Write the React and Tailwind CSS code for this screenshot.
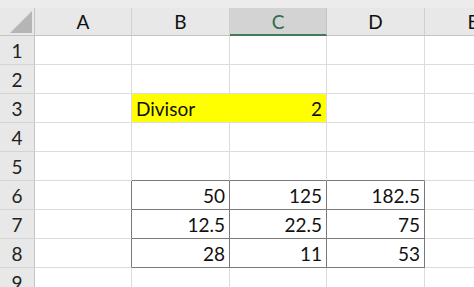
import React from "react";

const COLS = ["A", "B", "C", "D", "E"];
const COLW = ["w-[97px]", "w-[98px]", "w-[97px]", "w-[98px]", "w-[97px]"];

const data = {
  3: { B: { t: "Divisor", left: true }, C: { t: "2" } },
  6: { B: { t: "50" }, C: { t: "125" }, D: { t: "182.5" } },
  7: { B: { t: "12.5" }, C: { t: "22.5" }, D: { t: "75" } },
  8: { B: { t: "28" }, C: { t: "11" }, D: { t: "53" } },
};

function borderClasses(r, c) {
  const inTable = r >= 6 && r <= 8 && ["B", "C", "D"].includes(c);
  let right = "border-r-[#dcdcdc]";
  let bottom = "border-b-[#dcdcdc]";
  if (inTable) {
    right = "border-r-[#7a7a7a]";
    bottom = "border-b-[#7a7a7a]";
  }
  if (r >= 6 && r <= 8 && c === "A") right = "border-r-[#7a7a7a]";
  if (r === 5 && ["B", "C", "D"].includes(c)) bottom = "border-b-[#7a7a7a]";
  if (r === 3 && c === "B") right = "border-r-[#ffff00]";
  return right + " " + bottom;
}

function Cell({ r, c, w }) {
  const d = data[r] && data[r][c];
  const yellow = r === 3 && (c === "B" || c === "C");
  return (
    <div
      className={
        "h-[29px] shrink-0 border-r border-b flex items-end pb-[4px] px-[4px] text-[19px] leading-none text-[#111] " +
        w +
        " " +
        borderClasses(r, c) +
        " " +
        (yellow ? "bg-[#ffff00] " : "bg-white ") +
        (d && d.left ? "justify-start" : "justify-end")
      }
    >
      {d ? d.t : ""}
    </div>
  );
}

export default function App() {
  const rows = [1, 2, 3, 4, 5, 6, 7, 8, 9];
  return (
    <div className="w-[474px] h-[287px] overflow-hidden bg-white font-['Lato',sans-serif] select-none">
      <div className="h-[8px] bg-[#ececec]" />
      <div className="flex h-[28px] bg-[#e8e8e8]">
        <div className="w-[35px] h-[28px] shrink-0 border-r border-b border-[#c4c4c4] relative">
          <svg className="absolute left-0 top-0" width="35" height="28" viewBox="0 0 35 28">
            <polygon points="10,25 32,25 32,3" fill="#b5b5b5" />
          </svg>
        </div>
        {COLS.map((c, i) => {
          const sel = c === "C";
          return (
            <div
              key={c}
              className={
                "h-[28px] shrink-0 border-r flex items-end justify-center text-[19px] leading-none " +
                COLW[i] +
                (sel
                  ? " bg-[#d3d3d3] border-r-[#c4c4c4] border-b-2 border-b-[#3f7a59] text-[#2f6b4b] pb-[3px]"
                  : " border-r-[#d0d0d0] border-b border-b-[#c4c4c4] text-[#111] pb-[4px]")
              }
            >
              {c}
            </div>
          );
        })}
      </div>
      {rows.map((r) => (
        <div key={r} className="flex h-[29px]">
          <div className="w-[35px] h-[29px] shrink-0 bg-[#e8e8e8] border-r border-b border-r-[#c4c4c4] border-b-[#d4d4d4] flex items-end justify-center pb-[4px] text-[19px] leading-none text-[#222]">
            {r}
          </div>
          {COLS.map((c, i) => (
            <Cell key={c} r={r} c={c} w={COLW[i]} />
          ))}
        </div>
      ))}
    </div>
  );
}
